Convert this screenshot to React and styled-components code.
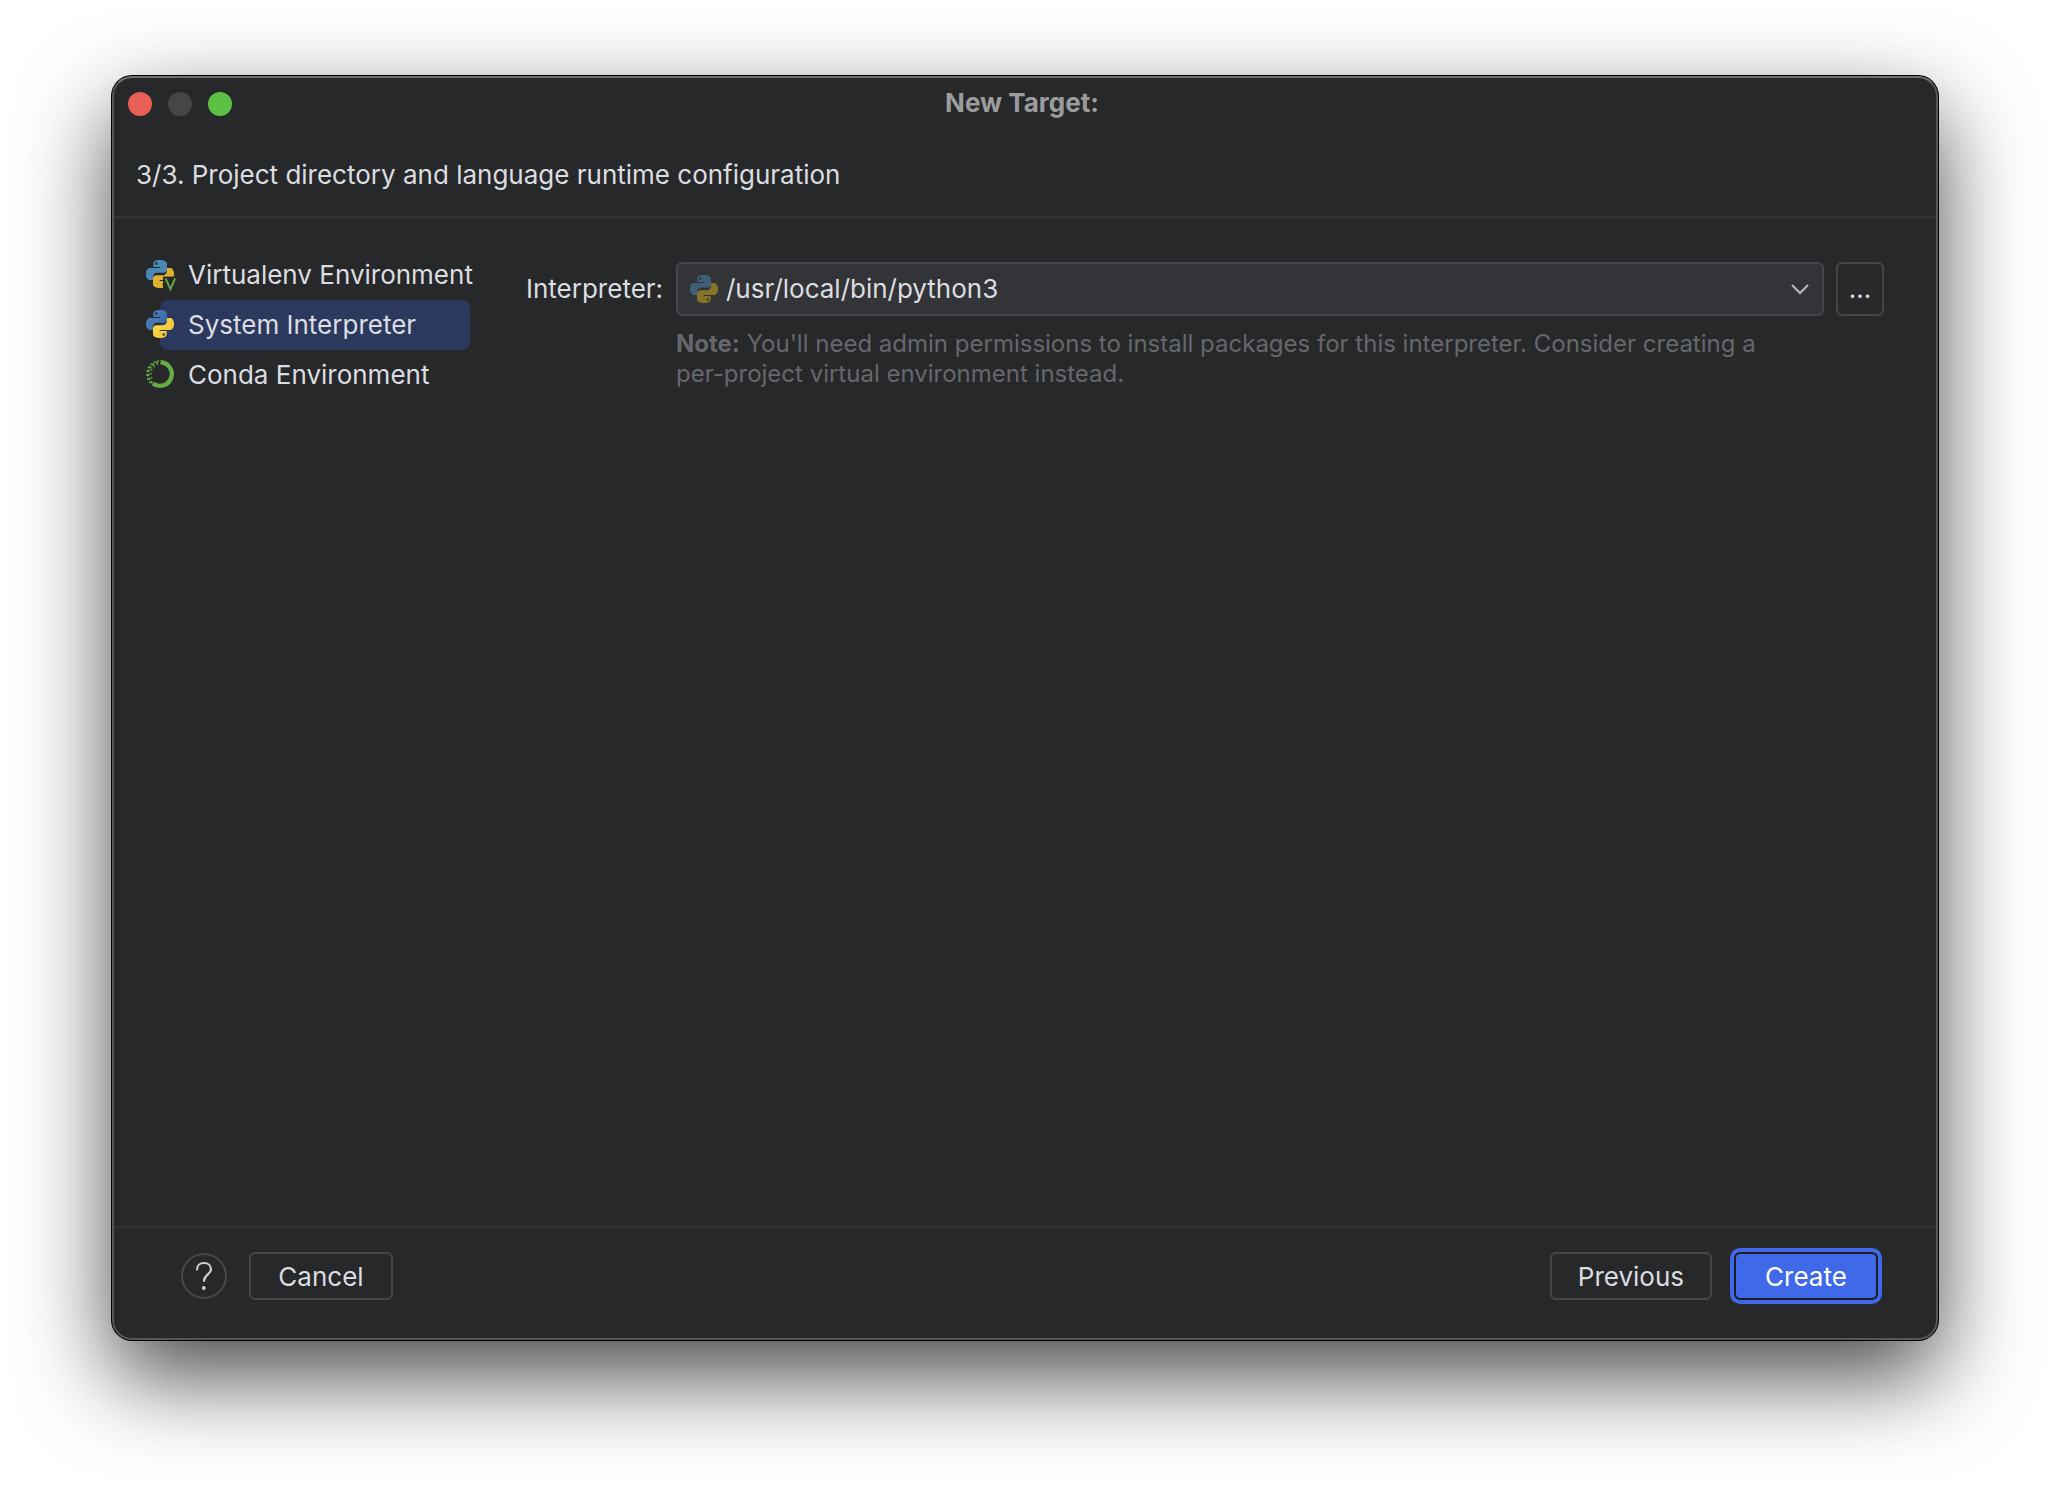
import React, { useState } from 'react'
import styled, { createGlobalStyle, css } from 'styled-components'

const GlobalStyle = createGlobalStyle`
  * { box-sizing: border-box; }
  body { margin: 0; background: #fff; }
  body, button, select {
    font-family: Inter, "Liberation Sans", sans-serif;
    font-size: 26px;
    line-height: 32px;
  }
`

const Page = styled.div`
  min-height: 100vh;
  padding: 76px 112px 148px;
  display: flex;
  overflow: hidden;
`

const Dialog = styled.main`
  flex: 1;
  display: flex;
  flex-direction: column;
  color: #dcdde0;
  background: #27282a;
  border: 2px solid #555657;
  border-top-color: #6f7271;
  border-radius: 20px;
  box-shadow: 0 0 0 1px #000, 0 36px 90px rgba(0, 0, 0, 0.72);
`

const TitleBar = styled.header`
  display: grid;
  grid-template-columns: 1fr auto 1fr;
  align-items: center;
  height: 52px;
  padding: 0 20px 0 14px;
`

const Lights = styled.div`
  display: flex;
  gap: 16px;
`

const Light = styled.button`
  width: 24px;
  height: 24px;
  padding: 0;
  border: 0;
  border-radius: 50%;
  background: ${({ $color }) => $color};
`

const Title = styled.h1`
  margin: 0;
  padding-bottom: 2px;
  font-size: 26px;
  font-weight: 700;
  color: #9c9c9d;
`

const Step = styled.h2`
  margin: 0;
  padding: 29px 22px 25px;
  font-size: 26px;
  font-weight: 400;
  border-bottom: 2px solid #323336;
`

const Body = styled.div`
  flex: 1;
  display: flex;
  gap: 56px;
  padding: 32px 52px 32px 46px;
`

const KindList = styled.nav`
  flex: none;
  width: 310px;
  display: flex;
  flex-direction: column;
`

const Kind = styled.button`
  display: flex;
  align-items: center;
  gap: 14px;
  height: 50px;
  padding: 0;
  border: 0;
  border-radius: 8px;
  color: inherit;
  white-space: nowrap;
  background: ${({ $active }) => ($active ? '#2c395e' : 'transparent')};

  /* the icon hangs over the left edge of the selection */
  svg { flex: none; margin: 0 0 2px -14px; overflow: visible; }
`

const Form = styled.form`
  flex: 1;
  display: grid;
  grid-template-columns: minmax(138px, auto) 1fr auto;
  align-content: start;
  align-items: center;
  gap: 12px;
  padding-top: 12px;
`

const Combo = styled.div`
  display: grid;
  align-items: center;
  height: 54px;

  > * { grid-area: 1 / 1; }
  > svg { pointer-events: none; z-index: 1; }
`

const ComboIcon = styled.svg`
  margin-left: 14px;
  opacity: 0.5;
`

const Chevron = styled.svg`
  justify-self: end;
  margin-right: 14px;
`

const Select = styled.select`
  appearance: none;
  width: 100%;
  height: 54px;
  padding: 0 48px;
  color: inherit;
  background: #333438;
  border: 2px solid #45464b;
  border-radius: 6px;
`

const Note = styled.p`
  grid-column: 2;
  margin: 0;
  padding: 1px 48px 0 0;
  font-size: 24px;
  line-height: 30px;
  color: #66676d;
`

const Footer = styled.footer`
  display: flex;
  align-items: center;
  gap: 22px;
  padding: 24px 58px 38px 67px;
  border-top: 2px solid #323336;
`

const Button = styled.button`
  height: 48px;
  min-width: 144px;
  padding: 2px 26px 0;
  color: #dcdde0;
  background: transparent;
  border: 2px solid #45464b;
  border-radius: 6px;

  ${({ $primary }) => $primary && css`
    color: #fff;
    background: #3f69e8;
    background-clip: padding-box;
    border-color: #1c1d22;
    box-shadow: 0 0 0 4px #3f69e8;
  `}
`

const BrowseButton = styled(Button)`
  min-width: 0;
  width: 48px;
  height: 54px;
  padding: 0;
`

const HelpButton = styled(Button)`
  display: grid;
  place-items: center;
  min-width: 0;
  width: 46px;
  height: 46px;
  padding: 0;
  border-radius: 50%;
`

const Spacer = styled.div`
  flex: 1;
`

const snake = 'M11.9 0C8 0 6.2 1 6.2 3.4V6h6v.8H3.6C1.2 6.8 0 9 0 12s1.2 5.2 3.4 5.2h2.7v-2.8c0-2 1.6-3.4 3.4-3.4h5.6c1.6 0 2.9-1.3 2.9-2.9V3.4C18 1.2 15.5 0 11.9 0z'

const Snakes = ({ blue, yellow }) => (
  <>
    <path d={snake} fill={blue} />
    <circle cx="8.8" cy="2.9" r="1.1" fill="#27384d" />
    <g transform="rotate(180 12 12)">
      <path d={snake} fill={yellow} />
      <circle cx="8.8" cy="2.9" r="1.1" fill="#5e4d1c" />
    </g>
  </>
)

const PythonIcon = () => (
  <svg width="28" height="28" viewBox="0 0 24 24" aria-hidden="true">
    <defs>
      <linearGradient id="py-blue" x1="0" y1="0" x2="1" y2="1">
        <stop offset="0" stopColor="#4f86c0" />
        <stop offset="1" stopColor="#38639b" />
      </linearGradient>
      {/* drawn rotated by half a turn, so the light end comes last */}
      <linearGradient id="py-yellow" x1="0" y1="0" x2="1" y2="1">
        <stop offset="0" stopColor="#eebd36" />
        <stop offset="1" stopColor="#fbe04f" />
      </linearGradient>
    </defs>
    <Snakes blue="url(#py-blue)" yellow="url(#py-yellow)" />
  </svg>
)

const VirtualenvIcon = () => (
  <svg width="28" height="28" viewBox="0 0 24 24" aria-hidden="true">
    <Snakes blue="#4b88b6" yellow="#dfb031" />
    <path d="M14.6 14.2H27V27H14.6z" fill="#27282a" />
    <path d="M16.8 15.8l4.1 9.2L25 15.8" fill="none" stroke="#62a544" strokeWidth="1.7" />
  </svg>
)

const CondaIcon = () => (
  <svg width="28" height="28" viewBox="0 0 28 28" aria-hidden="true">
    <path d="M14.5 2.2A11.8 11.8 0 1 1 7 23.5" fill="none" stroke="#67ab45" strokeWidth="4.4" />
    <g fill="none" stroke="#67ab45">
      <path d="M6.5 23A11.8 11.8 0 0 1 13 2.2" strokeWidth="2" strokeDasharray="2.4 1.6" />
      <path d="M4.4 23A13.2 13.2 0 0 1 13 .8" strokeWidth="1.5" strokeDasharray="1.8 2.2" />
      <path d="M7 20A9.8 9.8 0 0 1 12 4.4" strokeWidth="1.5" strokeDasharray="1.6 2.4" strokeDashoffset="2" />
    </g>
  </svg>
)

const kinds = [
  { name: 'Virtualenv Environment', Icon: VirtualenvIcon },
  { name: 'System Interpreter', Icon: PythonIcon },
  { name: 'Conda Environment', Icon: CondaIcon },
]

const App = () => {
  const [kind, setKind] = useState('System Interpreter')

  return (
    <Page>
      <GlobalStyle />
      <Dialog>
        <TitleBar>
          <Lights>
            <Light type="button" aria-label="Close" $color="#e96156" />
            <Light type="button" aria-label="Minimize" $color="#464648" />
            <Light type="button" aria-label="Zoom" $color="#5cc045" />
          </Lights>
          <Title>New Target:</Title>
        </TitleBar>
        <Step>3/3. Project directory and language runtime configuration</Step>

        <Body>
          <KindList>
            {kinds.map(({ name, Icon }) => (
              <Kind key={name} type="button" $active={kind === name} onClick={() => setKind(name)}>
                <Icon />
                {name}
              </Kind>
            ))}
          </KindList>

          <Form onSubmit={(e) => e.preventDefault()}>
            <label htmlFor="interpreter">Interpreter:</label>
            <Combo>
              <Select id="interpreter">
                <option>/usr/local/bin/python3</option>
              </Select>
              <ComboIcon width="28" height="28" viewBox="0 0 24 24" aria-hidden="true">
                <Snakes blue="#4b88b6" yellow="#d9b01c" />
              </ComboIcon>
              <Chevron width="20" height="12" viewBox="0 0 20 12" aria-hidden="true">
                <path d="M2.5 2.5L10 10l7.5-7.5" fill="none" stroke="#b4b8bf" strokeWidth="2" strokeLinecap="round" />
              </Chevron>
            </Combo>
            <BrowseButton type="button" aria-label="Browse">...</BrowseButton>
            <Note>
              <b>Note:</b> You'll need admin permissions to install packages for this interpreter. Consider creating a
              per-project virtual environment instead.
            </Note>
          </Form>
        </Body>

        <Footer>
          <HelpButton type="button" aria-label="Help">
            <svg width="20" height="30" viewBox="0 0 20 30" aria-hidden="true">
              <path d="M3 8.5C3 4.5 6 2 10 2s7 2.6 7 6.3c0 4.7-7 5.7-7 11.7" fill="none" stroke="#ced0d6" strokeWidth="2.2" strokeLinecap="round" />
              <circle cx="9.8" cy="27" r="1.9" fill="#ced0d6" />
            </svg>
          </HelpButton>
          <Button type="button">Cancel</Button>
          <Spacer />
          <Button type="button">Previous</Button>
          <Button type="button" $primary>Create</Button>
        </Footer>
      </Dialog>
    </Page>
  )
}

export default App
